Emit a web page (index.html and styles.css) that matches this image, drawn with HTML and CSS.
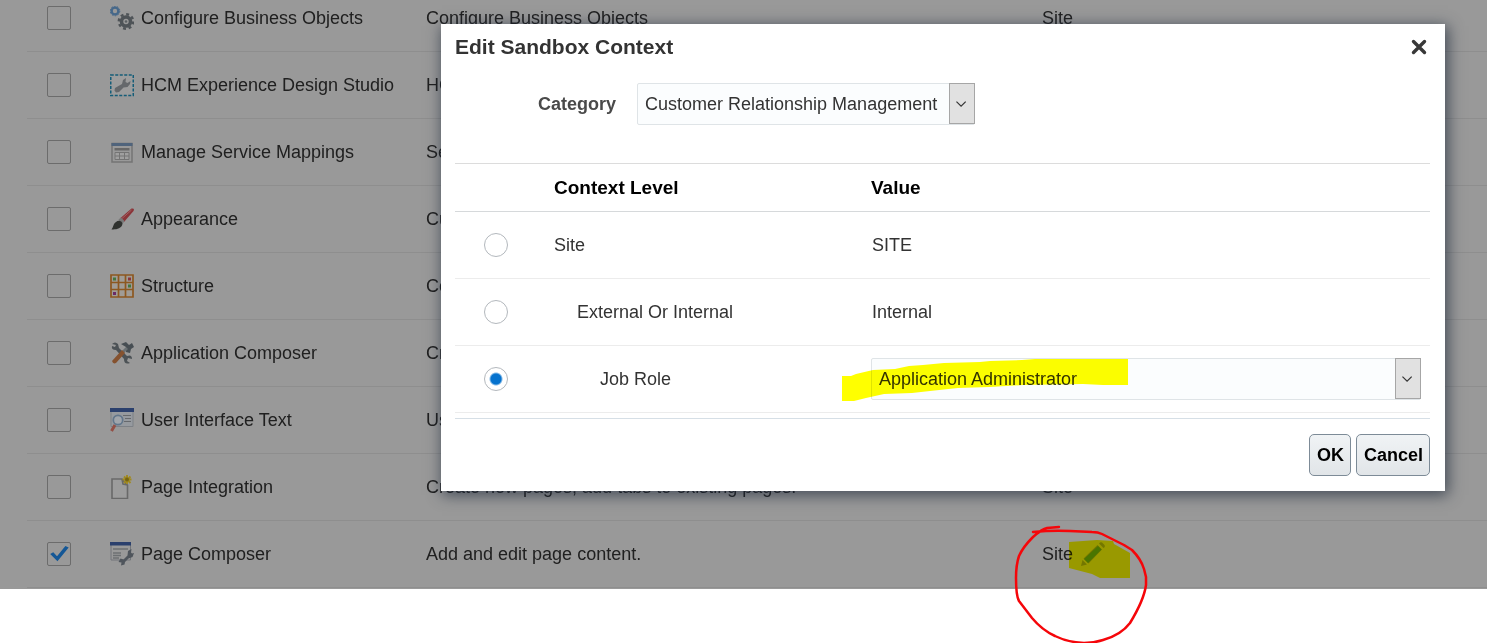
FILE: index.html
```html
<!DOCTYPE html>
<html lang="en">
<head>
<meta charset="utf-8">
<title>Edit Sandbox Context</title>
<link rel="stylesheet" href="styles.css">
</head>
<body>
<main class="page">
  <table class="tools">
    <colgroup><col class="col-check"><col class="col-name"><col class="col-desc"><col></colgroup>
    <tbody>
      <tr>
        <td><input class="check" type="checkbox" id="t1"></td>
        <td><label class="tool" for="t1">
          <svg class="icon" viewBox="0 0 24 24"><circle cx="5" cy="5" r="3.4" fill="none" stroke="#46688a" stroke-width="2.4"/><circle cx="5" cy="5" r="4.8" fill="none" stroke="#46688a" stroke-width="1" stroke-dasharray="1.6 1.4"/><circle cx="16" cy="15.500" r="4.500" fill="none" stroke="#4e5357" stroke-width="3.600"/><circle cx="16" cy="15.500" r="7.200" fill="none" stroke="#4e5357" stroke-width="2.400" stroke-dasharray="2.900 2.750"/><circle cx="16" cy="15.500" r="1.300" fill="#5b6063"/></svg>
          Configure Business Objects</label></td>
        <td>Configure Business Objects</td><td>Site</td>
      </tr>
      <tr>
        <td><input class="check" type="checkbox" id="t2"></td>
        <td><label class="tool" for="t2">
          <svg class="icon" viewBox="0 0 24 24"><rect x=".75" y="2" width="22.500" height="20.500" fill="#9d9d9d" stroke="#155d78" stroke-width="1.500" stroke-dasharray="3 1.500"/><path d="M4.500 17.500 6 19.500l3-.5 4.500-4.500 4-.5 2.500-3 .5-3-3 2-2-1 .5-4-3 2-1 4L5 15z" fill="#65686b"/></svg>
          HCM Experience Design Studio</label></td>
        <td>HCM Experience Design Studio</td><td>Site</td>
      </tr>
      <tr>
        <td><input class="check" type="checkbox" id="t3"></td>
        <td><label class="tool" for="t3">
          <svg class="icon" viewBox="0 0 24 24"><path d="M2 3.500h20v18.500H2z" fill="#999" stroke="#747474" stroke-width="1.500"/><path d="M1.500 3h21v3h-21z" fill="#50647c"/><path d="M4.500 8h15v2.500h-15z" fill="#686868"/><path d="M5 12.500h14v7H5zM5 16h14M9.500 12.500v7M14.500 12.500v7" fill="#a0a0a0" stroke="#747474"/></svg>
          Manage Service Mappings</label></td>
        <td>Service Mappings</td><td>Site</td>
      </tr>
      <tr>
        <td><input class="check" type="checkbox" id="t4"></td>
        <td><label class="tool" for="t4">
          <svg class="icon" viewBox="0 0 24 24"><path d="M10.500 11 21.500 1.500Q25 1 23.500 4L14 15z" fill="#8b3438"/><path d="m12 11.500 9.500-8.500" stroke="#a06063" stroke-width="1"/><path d="m8.500 12.500 2.500-2 3.500 3.500-2 3z" fill="#777"/><path d="M1.500 22.500C4 19 3 17 6 15c3-3 8 0 6 3.500-2 3.500-6 4-10.500 4z" fill="#30322f"/></svg>
          Appearance</label></td>
        <td>Customize appearance</td><td>Site</td>
      </tr>
      <tr>
        <td><input class="check" type="checkbox" id="t5"></td>
        <td><label class="tool" for="t5">
          <svg class="icon" viewBox="0 0 24 24"><path d="M1 1h22v22H1zM8.500 1v22M15.500 1v22M1 8.500h22M1 15.500h22" fill="#a09c96" stroke="#8d5820" stroke-width="1.700"/><path d="M3 3.500h3v3H3zM18 10.500h3v3h-3z" fill="#42773f"/><path d="M18 3.500h3v3h-3z" fill="#8b343b"/><path d="M3 18h3v3H3z" fill="#6a2b68"/></svg>
          Structure</label></td>
        <td>Configure navigation</td><td>Site</td>
      </tr>
      <tr>
        <td><input class="check" type="checkbox" id="t6"></td>
        <td><label class="tool" for="t6">
          <svg class="icon" viewBox="0 0 24 24"><path d="M2 3q3-3 6 0l1 4 8 8q5-2 5 3l-4-1-1 3 3 2q-6 2-6-4L6 9Q1 9 2 5l3 1 1-2z" fill="#4c5256"/><path d="m11 3 5-2 3 3 3-2 2 4-3 2-1 4-4-1V6z" fill="#474e53"/><path d="m16 6-4 4 2 2 4-4z" fill="#6b7073"/><path d="m12 9 3 3L6 22q-3 1.500-4-2z" fill="#85522f"/></svg>
          Application Composer</label></td>
        <td>Create and configure objects</td><td>Site</td>
      </tr>
      <tr>
        <td><input class="check" type="checkbox" id="t7"></td>
        <td><label class="tool" for="t7">
          <svg class="icon" viewBox="0 0 24 24"><path d="M1 1h22v17.500H1z" fill="#969a9f" stroke="#7d8186"/><path d="M0 0h24v4H0z" fill="#2b406d"/><path d="M13 7.500h8M15 10.500h6M14 13.500h7" stroke="#66696d" stroke-width="1.200"/><path d="m5 17-3.500 6" stroke="#944f45" stroke-width="3"/><circle cx="8" cy="12" r="4.700" fill="#a0a5ab" stroke="#62768b" stroke-width="1.700"/></svg>
          User Interface Text</label></td>
        <td>User interface text</td><td>Site</td>
      </tr>
      <tr>
        <td><input class="check" type="checkbox" id="t8"></td>
        <td><label class="tool" for="t8">
          <svg class="icon" viewBox="0 0 24 24"><path d="M2 4h10l5.500 6v13.500H2zM12 4l1 5 4.500 1" fill="#9c9c9c" stroke="#696969" stroke-width="1.600"/><path d="M17 0v9M12.500 4.500h9M14 1.500l6.500 6.500M20.500 1.500 14 8" stroke="#a18a20" stroke-width="1.900"/><circle cx="17" cy="4.500" r="2" fill="#756414"/></svg>
          Page Integration</label></td>
        <td>Create new pages; add tabs to existing pages.</td><td>Site</td>
      </tr>
      <tr>
        <td><input class="check" type="checkbox" id="t9" checked></td>
        <td><label class="tool" for="t9">
          <svg class="icon" viewBox="0 0 24 24"><path d="M1 1h19.500v17H1z" fill="#999" stroke="#72757a"/><path d="M0 0h21v3.500H0z" fill="#2b406d"/><path d="M3 7h15M3 11h8M3 13.500h8M3 16h6" stroke="#6d7073" stroke-width="1.500"/><path d="m8.500 20 2-3.500 3 1 4-4 .5-4.500 3.500-2L21 10.500l1 1 2-.5-1.500 4-4 1.500-3.500 3.500-.5 2.500-3.500 1 .5-3z" fill="#4f555c"/></svg>
          Page Composer</label></td>
        <td>Add and edit page content.</td>
        <td><span class="context">Site
          <button class="edit" type="button" aria-label="Edit context">
            <svg class="icon" viewBox="0 0 24 24"><path d="m0 24 1.500-6 4.500 4.500zM2.500 16.500 16.500 3 21 7.500 7.500 21.500zM18 1.500q2-2.500 4 0l1 1q2 2-.5 3.500z" fill="#747774"/><path d="m3 17 14-13 3.500 3.500L7 21z" fill="#4a7550"/></svg>
          </button>
          <svg class="mark circled" viewBox="0 0 134 120"><path class="highlight" d="M55 17 83 15l16 1 1 3 16 9v25H86l-8-4-23-6z"/></svg>
          <svg class="mark circled plain" viewBox="0 0 134 120"><path class="pen" d="M19 7Q39 5 56 6L78 7Q84 7 88 9L100 15 110 20 118 25Q127 34 130 44L132 52V60Q130 75 116 98 107 110 89 115 80 118 70 118 53 117 41 111 28 105 18 93L5 76Q2 71 2 53 2 40 5 31 9 22 19 12 28 4 33 3L45 2"/></svg>
        </span></td>
      </tr>
    </tbody>
  </table>
</main>

<section class="dialog" role="dialog" aria-labelledby="dialog-title">
  <header class="dialog-head">
    <h1 id="dialog-title">Edit Sandbox Context</h1>
    <button class="close" type="button" aria-label="Close"><svg viewBox="0 0 16 16"><path d="m2.500 2.500 11 11M13.500 2.500l-11 11"/></svg></button>
  </header>
  <div class="category">
    <label for="category">Category</label>
    <span class="picker">
      <select id="category"><option>Customer Relationship Management</option></select>
      <svg class="arrow" viewBox="0 0 26 40"><path d="m7 18 5 5 5-5"/></svg>
    </span>
  </div>
  <table class="levels">
    <colgroup><col class="col-radio"><col class="col-level"><col></colgroup>
    <thead><tr><th></th><th>Context Level</th><th>Value</th></tr></thead>
    <tbody>
      <tr><td><input class="radio" type="radio" name="level" id="l1"></td><td><label for="l1">Site</label></td><td class="value">SITE</td></tr>
      <tr><td><input class="radio" type="radio" name="level" id="l2"></td><td><label class="indent" for="l2">External Or Internal</label></td><td class="value">Internal</td></tr>
      <tr><td><input class="radio" type="radio" name="level" id="l3" checked></td><td><label class="indent deep" for="l3">Job Role</label></td>
        <td><div class="picker wide">
          <select aria-label="Job Role value"><option>Application Administrator</option></select>
          <svg class="arrow" viewBox="0 0 26 40"><path d="m7 18 5 5 5-5"/></svg>
          <svg class="mark stroke" viewBox="0 0 286 44"><path class="highlight" d="M0 18h9l5-2 17-4 22-1 14-3 14-1 21-2 36-1 10-1 32-1 13-1h93v26h-25l-20-1-60 1-33 2-32 1-28 3-18 2-28 1-18 4-12 3H0z"/></svg>
        </div></td></tr>
    </tbody>
  </table>
  <footer class="actions">
    <button class="btn" type="button">OK</button>
    <button class="btn" type="button">Cancel</button>
  </footer>
</section>
</body>
</html>
```
FILE: styles.css
```css
* { box-sizing: border-box; }

body {
  display: flow-root;
  min-height: 100vh;
  margin: 0;
  background: #fff;
  color: #333;
  font: 18px/24px "Liberation Sans", Arial, sans-serif;
}

button, select { font: inherit; color: inherit; }
input { margin: 0; }

.page {
  margin-top: -15px;
  padding: 0 0 1px 27px;
  background: #999;
  color: #202020;
}

table {
  width: 100%;
  table-layout: fixed;
  border-collapse: separate;
  border-spacing: 0;
}

td { padding: 0; }

.tools td {
  height: 67px;
  border-bottom: 1px solid #8e8e8e;
  white-space: nowrap;
}
.tools td:first-child { padding-left: 20px; }
.col-check { width: 83px; }
.col-name { width: 316px; }
.col-desc { width: 616px; }

.check {
  appearance: none;
  display: block;
  width: 24px;
  height: 24px;
  border: 1px solid #6c6c6c;
  border-radius: 2px;
}
.check:checked::before {
  content: "";
  display: block;
  width: 22px;
  height: 22px;
  background: #145796;
  clip-path: polygon(10% 50%, 24% 42%, 41% 60%, 79% 14%, 94% 20%, 43% 83%);
}

.tool {
  display: flex;
  align-items: center;
  gap: 7px;
}
.icon {
  display: block;
  flex: none;
  width: 24px;
  height: 24px;
}

.context {
  position: relative;
  display: inline-flex;
  align-items: center;
  gap: 8px;
}
.edit {
  padding: 0;
  border: 0;
  background: none;
}

.mark {
  position: absolute;
  pointer-events: none;
  mix-blend-mode: multiply;
}
.circled {
  left: -28px;
  top: -17px;
  width: 134px;
  height: 120px;
}
.plain { mix-blend-mode: normal; }
.highlight { fill: #ff0; }
.pen {
  fill: none;
  stroke: #f5060a;
  stroke-width: 2.5px;
  stroke-linecap: round;
  stroke-linejoin: round;
}
.stroke {
  left: -29px;
  top: 0;
  width: 286px;
  height: 44px;
}

.dialog {
  position: absolute;
  top: 24px;
  left: 441px;
  right: 42px;
  padding: 8px 15px 15px 14px;
  background: #fff;
  box-shadow: 2px 3px 14px 1px rgba(30, 42, 58, 0.7);
}

.dialog-head {
  display: flex;
  align-items: center;
  justify-content: space-between;
  height: 30px;
}
h1 {
  margin: 0;
  font-size: 21px;
  line-height: 30px;
}
.close {
  width: 22px;
  height: 22px;
  padding: 3px;
  border: 0;
  background: none;
}
.close svg {
  display: block;
  width: 16px;
  height: 16px;
  stroke: #383838;
  stroke-width: 3.4px;
  stroke-linecap: round;
}

.category {
  display: flex;
  align-items: center;
  gap: 21px;
  padding: 21px 0 38px 83px;
}
.category label {
  color: #4a4a4a;
  font-weight: bold;
}

.picker {
  position: relative;
  display: block;
  width: 338px;
}
.picker.wide {
  width: auto;
  margin-right: 9px;
}
.picker select {
  appearance: none;
  display: block;
  width: 100%;
  height: 42px;
  padding: 0 28px 0 7px;
  border: 1px solid #dfe4e7;
  border-radius: 2px;
  background: #fbfdfe;
}
.arrow {
  position: absolute;
  top: 0;
  right: 0;
  width: 26px;
  height: 41px;
  border: 1px solid #a6a6a6;
  background: #e1e1e1;
  fill: none;
  stroke: #333;
  stroke-width: 1.3px;
  pointer-events: none;
}

.levels {
  padding-bottom: 5px;
  border-top: 1px solid #dcdcdc;
  border-bottom: 1px solid #d6dfe6;
}
.col-radio { width: 99px; }
.col-level { width: 317px; }
.levels th {
  height: 48px;
  padding: 0;
  border-bottom: 1px solid #d6d9db;
  color: #000;
  font-size: 19px;
  text-align: left;
}
.levels td {
  height: 67px;
  border-bottom: 1px solid #ececec;
}
.levels td:first-child { padding-left: 29px; }
.levels .value { padding-left: 1px; }
.indent { padding-left: 23px; }
.indent.deep { padding-left: 46px; }

.radio {
  appearance: none;
  display: block;
  width: 24px;
  height: 24px;
  border: 1px solid #b3b8bd;
  border-radius: 50%;
}
.radio:checked { background: radial-gradient(circle, #0572ce 5px, #fff 7px); }

.actions {
  display: flex;
  justify-content: flex-end;
  gap: 5px;
  padding-top: 15px;
}
.btn {
  height: 42px;
  padding: 0 6px 0 7px;
  border: 1px solid #7d8b97;
  border-radius: 5px;
  background: linear-gradient(#f0f3f5, #e1e5e8);
  color: #000;
  font-weight: bold;
}
```
